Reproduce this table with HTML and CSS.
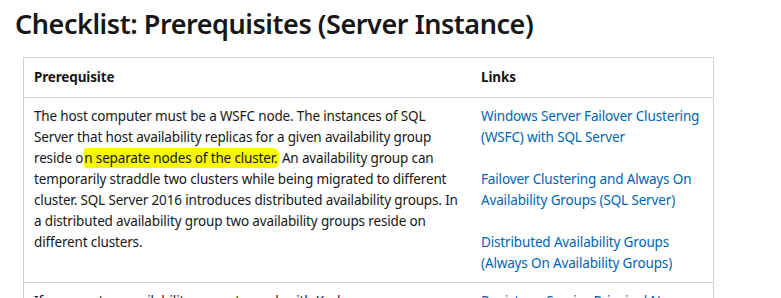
FILE: index.html
```html
<!DOCTYPE html>
<html lang="en">

<head>
    <meta charset="UTF-8">
    <title>Checklist: Prerequisites (Server Instance)</title>
    <link rel="stylesheet" href="styles.css">
</head>

<body>
    <div class="content">
        <h2>Checklist: Prerequisites (Server Instance)</h2>
        <div class="table-wrap">
            <table>
                <thead>
                    <tr>
                        <th class="col-pre">Prerequisite</th>
                        <th class="col-links">Links</th>
                    </tr>
                </thead>
                <tbody>
                    <tr>
                        <td>The host computer must be a WSFC node. The instances of SQL Server that host availability replicas for a given availability group reside o<span class="mark">n separate nodes of the cluster.</span> An availability group can temporarily straddle two clusters while being migrated to different cluster. SQL Server 2016 introduces distributed availability groups. In a distributed availability group two availability groups reside on different clusters.</td>
                        <td>
                            <p><a href="#">Windows Server Failover Clustering (WSFC) with SQL Server</a></p>
                            <p><a href="#">Failover Clustering and Always On Availability Groups (SQL Server)</a></p>
                            <p><a href="#">Distributed Availability Groups (Always On Availability Groups)</a></p>
                        </td>
                    </tr>
                    <tr>
                        <td>If you want an availability group to work with Kerberos:</td>
                        <td>
                            <p><a href="#">Register a Service Principal Name for Kerberos Connections</a></p>
                        </td>
                    </tr>
                </tbody>
            </table>
        </div>
    </div>
</body>

</html>
```

FILE: styles.css
```css
* {
    padding: 0;
    margin: 0;
}
body {
    background: #fff;
    color: #171717;
    font-family: "Noto Sans", "Open Sans", sans-serif;
}
.content {
    padding: 6px 0 0 15px;
}
h2 {
    font-size: 27px;
    font-weight: 600;
    line-height: 36px;
    letter-spacing: -0.45px;
    color: #171717;
}
.table-wrap {
    margin: 15px 0 0 8px;
    width: 691px;
}
table {
    width: 100%;
    border-collapse: collapse;
    border: 1px solid #d1d1d1;
    font-size: 13.5px;
    line-height: 21px;
    letter-spacing: -0.15px;
}
th {
    text-align: left;
    font-weight: 700;
    padding: 9px 10px 9px 10px;
    border-bottom: 1px solid #d1d1d1;
}
th.col-pre {
    width: 427px;
}
td {
    vertical-align: top;
    padding: 8px 10px 8px 10px;
    border-top: 1px solid #d1d1d1;
}
td p {
    margin-bottom: 21px;
}
td p:last-child {
    margin-bottom: 0;
}
a {
    color: #0065b3;
    text-decoration: none;
}
.mark {
    background: #f9f900;
    padding: 1px 1px 1px 0;
    margin-left: 1px;
    border-radius: 2px 6px 5px 3px;
}
```
